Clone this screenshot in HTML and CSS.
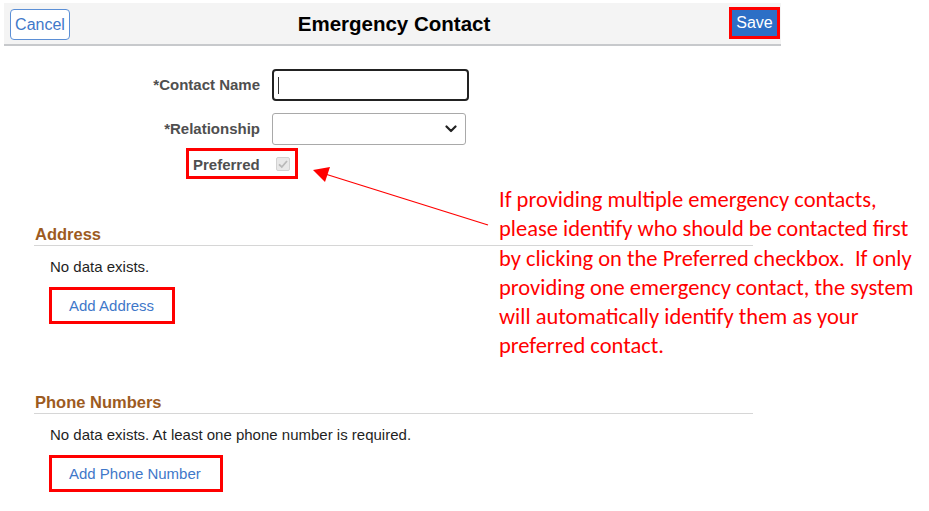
FILE: index.html
```html
<!DOCTYPE html>
<html lang="en">
<head>
<meta charset="utf-8">
<title>Emergency Contact</title>
<link rel="stylesheet" href="styles.css">
</head>
<body>
<div class="page">
  <header class="header">
    <div class="hleft"><button class="btn-cancel" type="button">Cancel</button></div>
    <h1 class="title">Emergency Contact</h1>
    <div class="hright"><button class="btn-save" type="button">Save</button></div>
  </header>

  <div class="form">
    <div class="row row-name">
      <label class="lbl">*Contact Name</label>
      <div class="textbox"><span class="caret"></span></div>
    </div>
    <div class="row row-rel">
      <label class="lbl">*Relationship</label>
      <div class="select">
        <svg class="chev" width="12" height="8" viewBox="0 0 12 8"><path d="M1.5 1.5 L6 6 L10.5 1.5" fill="none" stroke="#222" stroke-width="2.2" stroke-linecap="round" stroke-linejoin="round"/></svg>
      </div>
    </div>
    <div class="row row-pref">
      <div class="pref-box">
        <span class="lbl-pref">Preferred</span>
        <span class="chk">
          <svg width="12" height="12" viewBox="0 0 12 12"><path d="M2 6.3 L4.8 9 L10 3" fill="none" stroke="#b9b9b9" stroke-width="1.8"/></svg>
        </span>
      </div>
    </div>
  </div>

  <section class="section sec-address">
    <h2 class="sec-title">Address</h2>
    <p class="nodata">No data exists.</p>
    <div class="add-box"><span class="add-link">Add Address</span></div>
  </section>

  <section class="section sec-phone">
    <h2 class="sec-title">Phone Numbers</h2>
    <p class="nodata">No data exists. At least one phone number is required.</p>
    <div class="add-box add-phone"><span class="add-link">Add Phone Number</span></div>
  </section>

  <div class="note">If providing multiple emergency contacts,<br>please identify who should be contacted first<br>by clicking on the Preferred checkbox.&nbsp; If only<br>providing one emergency contact, the system<br>will automatically identify them as your<br>preferred contact.</div>

  <svg class="arrow" width="929" height="511" viewBox="0 0 929 511">
    <line x1="488" y1="222" x2="322" y2="170" stroke="#ff0000" stroke-width="1.3"/>
    <polygon points="313,167 330,164 325,179" fill="#ff0000"/>
  </svg>
</div>
</body>
</html>
```

FILE: styles.css
```css
* { box-sizing: border-box; }
html, body { margin: 0; padding: 0; background: #fff; }
body {
  font-family: "Liberation Sans", Arial, sans-serif;
  color: #222;
  width: 929px;
  height: 511px;
  overflow: hidden;
}
.page { position: relative; width: 929px; height: 511px; }

.header {
  margin: 3px 0 0 4px;
  width: 777px;
  height: 43px;
  background: #f4f4f4;
  border-bottom: 2px solid #c7c9cc;
  display: grid;
  grid-template-columns: 1fr auto 1fr;
  align-items: center;
  padding: 0 1px 0 6px;
}
.hleft { display: flex; }
.hright { display: flex; justify-content: flex-end; }
.title {
  margin: 0;
  font-size: 20.5px;
  font-weight: bold;
  color: #000;
  padding-left: 0;
  padding-right: 2px;
}
.btn-cancel {
  font-family: inherit;
  font-size: 16px;
  color: #3f78c9;
  background: #fff;
  border: 1px solid #5b8fd6;
  border-radius: 4px;
  width: 60px;
  height: 31px;
  padding: 0;
  margin-top: 2px;
}
.btn-save {
  font-family: inherit;
  font-size: 16px;
  color: #fff;
  background: #2c6fc6;
  border: 3px solid #ff0000;
  width: 51px;
  height: 32px;
  padding: 0;
  margin-top: -2px;
}

.form { margin-top: 23px; }
.row { display: flex; align-items: center; }
.lbl {
  width: 260px;
  text-align: right;
  font-size: 15px;
  font-weight: bold;
  color: #4f4f4f;
}
.row-name .lbl { padding-bottom: 2px; }
.row-rel .lbl { padding-bottom: 2px; }
.textbox {
  margin-left: 12px;
  width: 197px;
  height: 32px;
  border: 2px solid #222;
  border-radius: 4px;
  background: #fff;
  display: flex;
  align-items: center;
  padding-left: 4px;
}
.caret { width: 1px; height: 17px; background: #333; }
.row-rel { margin-top: 12px; }
.select {
  margin-left: 12px;
  width: 194px;
  height: 32px;
  border: 1px solid #a9a9a9;
  border-radius: 3px;
  display: flex;
  align-items: center;
  justify-content: flex-end;
  padding-right: 8px;
}
.chev { display: block; }
.row-pref { margin-top: 3px; }
.pref-box {
  margin-left: 186px;
  width: 112px;
  height: 31px;
  border: 3px solid #ff0000;
  display: flex;
  align-items: center;
  padding-left: 4px;
}
.lbl-pref {
  font-size: 15px;
  font-weight: bold;
  color: #4f4f4f;
  width: 83px;
  padding-top: 2px;
}
.chk {
  width: 14px;
  height: 14px;
  background: #e8e8e8;
  border: 1px solid #d2d2d2;
  border-radius: 2px;
  display: flex;
  align-items: center;
  justify-content: center;
}
.chk svg { display: block; }

.section { margin-left: 34px; width: 719px; }
.sec-address { margin-top: 46px; }
.sec-phone { margin-top: 69px; }
.sec-title {
  margin: 0;
  font-size: 16.5px;
  font-weight: bold;
  color: #9d5b1f;
  padding: 0 0 2px 1px;
  line-height: 18px;
  border-bottom: 1px solid #d6d6d6;
}
.nodata {
  margin: 12px 0 0 16px;
  font-size: 15px;
  line-height: 18px;
  color: #1f1f1f;
}
.add-box {
  margin: 11px 0 0 15px;
  width: 126px;
  height: 37px;
  border: 3px solid #ff0000;
  display: flex;
  align-items: center;
  padding-left: 17px;
  padding-bottom: 1px;
}
.add-phone { width: 174px; }
.add-link { font-size: 15px; color: #3f78c9; }

.note {
  position: absolute;
  left: 499px;
  top: 182px;
  width: 430px;
  white-space: nowrap;
  font-family: Carlito, Calibri, Lato, "Noto Sans", sans-serif;
  font-size: 22.5px;
  line-height: 29.3px;
  color: #ff0000;
}
.arrow { position: absolute; left: 0; top: 0; pointer-events: none; }
```
